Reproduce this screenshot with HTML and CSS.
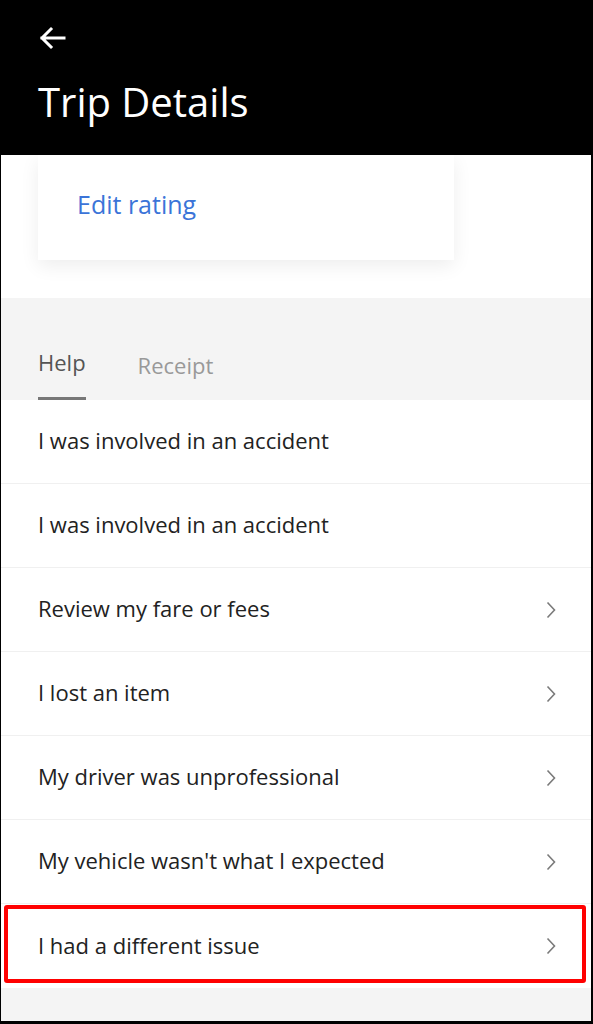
FILE: index.html
```html
<!DOCTYPE html>
<html lang="en">
<head>
<meta charset="utf-8">
<title>Trip Details</title>
<link rel="stylesheet" href="styles.css">
</head>
<body>
<div class="screen">
  <header class="topbar">
    <svg class="back" width="28" height="24" viewBox="0 0 28 24" aria-hidden="true">
      <path d="M26 12H4M13 3L4 12l9 9" fill="none" stroke="#fff" stroke-width="3" stroke-linecap="square"/>
    </svg>
    <h1 class="title">Trip Details</h1>
  </header>

  <section class="rating-area">
    <div class="rating-card">
      <a class="edit-link">Edit rating</a>
    </div>
  </section>

  <nav class="tabs">
    <span class="tab tab-active">Help</span>
    <span class="tab">Receipt</span>
  </nav>

  <ul class="help-list">
    <li class="help-row"><span>I was involved in an accident</span></li>
    <li class="help-row"><span>I was involved in an accident</span></li>
    <li class="help-row"><span>Review my fare or fees</span><svg class="chev" width="10" height="18" viewBox="0 0 10 18"><path d="M1.5 1.5L8.5 9l-7 7.5" fill="none" stroke="#7a7a7a" stroke-width="1.6"/></svg></li>
    <li class="help-row"><span>I lost an item</span><svg class="chev" width="10" height="18" viewBox="0 0 10 18"><path d="M1.5 1.5L8.5 9l-7 7.5" fill="none" stroke="#7a7a7a" stroke-width="1.6"/></svg></li>
    <li class="help-row"><span>My driver was unprofessional</span><svg class="chev" width="10" height="18" viewBox="0 0 10 18"><path d="M1.5 1.5L8.5 9l-7 7.5" fill="none" stroke="#7a7a7a" stroke-width="1.6"/></svg></li>
    <li class="help-row"><span>My vehicle wasn't what I expected</span><svg class="chev" width="10" height="18" viewBox="0 0 10 18"><path d="M1.5 1.5L8.5 9l-7 7.5" fill="none" stroke="#7a7a7a" stroke-width="1.6"/></svg></li>
    <li class="help-row highlighted"><span>I had a different issue</span><svg class="chev" width="10" height="18" viewBox="0 0 10 18"><path d="M1.5 1.5L8.5 9l-7 7.5" fill="none" stroke="#7a7a7a" stroke-width="1.6"/></svg></li>
  </ul>

  <div class="bottom-fill"></div>
</div>
</body>
</html>
```

FILE: styles.css
```css
*, *::before, *::after { box-sizing: border-box; }

html, body {
  margin: 0;
  padding: 0;
  background: #000;
}

.screen {
  position: relative;
  width: 593px;
  height: 1024px;
  display: flex;
  flex-direction: column;
  border-left: 1px solid #000;
  border-right: 2px solid #000;
  border-bottom: 3px solid #000;
  background: #f4f4f4;
  font-family: "Open Sans", "Liberation Sans", sans-serif;
  overflow: hidden;
}

.topbar {
  height: 155px;
  flex: none;
  background: #000;
  color: #fff;
  padding: 26px 0 0 37px;
}

.back {
  display: block;
}

.title {
  margin: 28px 0 0;
  font-size: 40px;
  font-weight: 400;
  line-height: 48px;
}

.rating-area {
  height: 143px;
  flex: none;
  background: #fff;
  padding: 0 137px 0 37px;
}

.rating-card {
  height: 105px;
  background: #fff;
  box-shadow: 0 6px 18px rgba(0, 0, 0, 0.07);
  padding: 33px 0 0 39px;
}

.edit-link {
  color: #3b74d8;
  font-size: 25px;
  line-height: 32px;
}

.tabs {
  height: 102px;
  flex: none;
  background: #f4f4f4;
  display: flex;
  gap: 52px;
  padding: 0 0 0 37px;
  align-items: flex-end;
}

.tab {
  font-size: 22px;
  line-height: 28px;
  color: #999;
  padding-bottom: 21px;
}

.tab-active {
  color: #555;
  border-bottom: 3px solid #777;
}

.help-list {
  list-style: none;
  margin: 0;
  padding: 0;
  background: #fff;
  flex: none;
}

.help-row {
  position: relative;
  height: 84px;
  display: flex;
  align-items: center;
  justify-content: space-between;
  padding: 0 35px 3px 37px;
  border-bottom: 1px solid #f0f0f0;
  font-size: 22px;
  color: #222;
}

.help-row:last-child {
  border-bottom: none;
}

.chev {
  flex: none;
  margin-top: 3px;
}

/* red focus outline drawn over the selected row */
.highlighted::after {
  content: "";
  position: absolute;
  left: 3px;
  top: 1px;
  width: 582px;
  height: 78px;
  border: 4px solid #ff0000;
  border-radius: 3px;
}

.bottom-fill {
  flex: 1;
  background: #f4f4f4;
}
```
